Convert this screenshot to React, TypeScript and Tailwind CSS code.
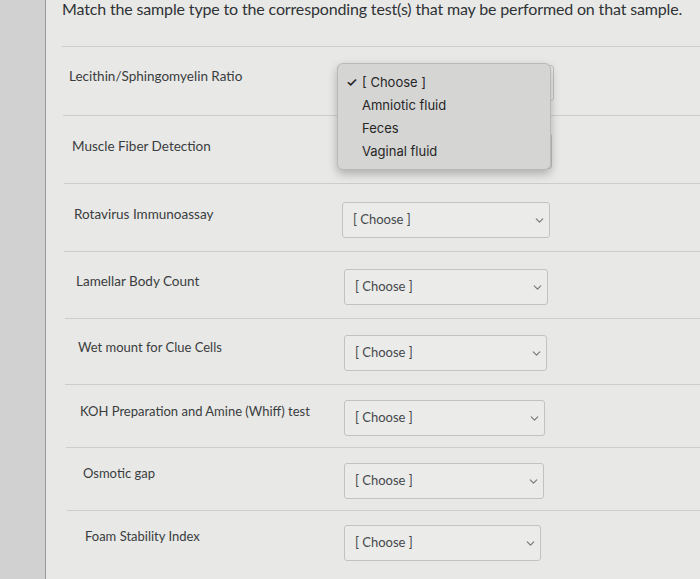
import { ChevronDown } from "lucide-react";

type Row = {
  label: string;
  rowClass: string;
  labelClass: string;
  selectClass: string;
  covered?: boolean;
};

// the photo is slightly skewed, so each row carries its own offsets
const rows: Row[] = [
  { label: "Lecithin/Sphingomyelin Ratio", rowClass: "h-[69px] ml-0", labelClass: "pl-[7px] pt-[20px] text-[13.5px]", selectClass: "ml-[275px] mt-[18px] w-[217px]", covered: true },
  { label: "Muscle Fiber Detection", rowClass: "h-[68px] ml-[1px]", labelClass: "pl-[9px] pt-[21px] text-[13.5px]", selectClass: "ml-[276px] mt-[17px] w-[213px]", covered: true },
  { label: "Rotavirus Immunoassay", rowClass: "h-[68px] ml-[2px]", labelClass: "pl-[10px] pt-[21px] text-[13.5px]", selectClass: "ml-[278px] mt-[18px] w-[208px]" },
  { label: "Lamellar Body Count", rowClass: "h-[67px] ml-[2px]", labelClass: "pl-[12px] pt-[20px] text-[13.5px]", selectClass: "ml-[280px] mt-[17px] w-[204px]" },
  { label: "Wet mount for Clue Cells", rowClass: "h-[66px] ml-[3px]", labelClass: "pl-[13px] pt-[19px] text-[13px]", selectClass: "ml-[279px] mt-[16px] w-[203px]" },
  { label: "KOH Preparation and Amine (Whiff) test", rowClass: "h-[63px] ml-[3px]", labelClass: "pl-[15px] pt-[17px] text-[13px]", selectClass: "ml-[279px] mt-[15px] w-[201px]" },
  { label: "Osmotic gap", rowClass: "h-[63px] ml-[4px]", labelClass: "pl-[17px] pt-[16px] text-[13px]", selectClass: "ml-[278px] mt-[15px] w-[200px]" },
  { label: "Foam Stability Index", rowClass: "h-[69px] ml-[5px]", labelClass: "pl-[18px] pt-[16px] text-[13px]", selectClass: "ml-[277px] mt-[14px] w-[197px]" },
];

function ChooseSelect({ className, covered }: { className: string; covered?: boolean }) {
  return (
    <div
      className={`${className} absolute top-0 left-0 flex h-[36px] items-center justify-between rounded-[3px] border border-[#c2c2c1] bg-[#ebebea] pl-[10px] pr-[3px] text-[13px] text-[#45484a]`}
    >
      {/* the open menu hides the value of the first two selects */}
      <span>{covered ? "" : "[ Choose ]"}</span>
      <ChevronDown className="h-[13px] w-[13px] text-[#7a7a7a]" strokeWidth={2.2} />
    </div>
  );
}

export default function App() {
  return (
    <div className="relative flex h-[579px] w-[700px] overflow-hidden bg-[#e8e8e6] font-['Lato',sans-serif] text-[#333a40]">
      <div className="w-[46px] shrink-0 border-r border-[#9a9a9a] bg-[#d0d1d0]" />
      <div className="flex min-w-0 flex-1 flex-col pl-[16px]">
        <h1 className="h-[46px] whitespace-nowrap text-[16px] leading-[18px] tracking-[-0.15px] text-[#2f3336]">
          Match the sample type to the corresponding test(s) that may be performed on that sample.
        </h1>
        {rows.map((row) => (
          <div key={row.label} className={`${row.rowClass} relative shrink-0 border-t border-[#cdcdcc]`}>
            <div className={`${row.labelClass} leading-[18px] text-[#3a3d40]`}>{row.label}</div>
            <div className="absolute inset-0">
              <ChooseSelect className={row.selectClass} covered={row.covered} />
            </div>
          </div>
        ))}
      </div>

      {/* open native dropdown over the first two rows */}
      <div className="absolute left-[337px] top-[63px] h-[107px] w-[214px] rounded-[6px] border border-[#b9b9b8] bg-[#d5d5d4] pt-[7px] font-['Inter',sans-serif] text-[13px] leading-[23px] text-[#262626] shadow-[0_4px_10px_rgba(0,0,0,0.25)]">
        <div className="flex">
          <span className="w-[24px] pl-[8px] text-[13px] font-semibold">✓</span>
          <span>[ Choose ]</span>
        </div>
        <div className="pl-[24px]">Amniotic fluid</div>
        <div className="pl-[24px]">Feces</div>
        <div className="pl-[24px]">Vaginal fluid</div>
      </div>
    </div>
  );
}
